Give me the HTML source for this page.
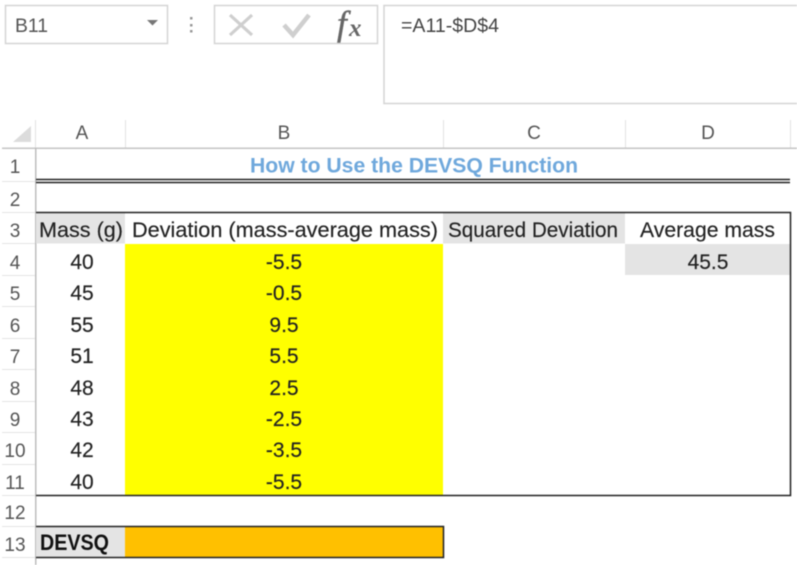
<!DOCTYPE html>
<html><head><meta charset="utf-8"><style>
html,body{margin:0;padding:0;background:#fff;width:797px;height:565px;overflow:hidden}
svg{display:block;filter:blur(.4px)}
text{font-family:"Liberation Sans",sans-serif}
.h{font-size:19px;fill:#555;text-anchor:middle}
.c{font-size:21px;fill:#222;text-anchor:middle;stroke:#222;stroke-width:.15px}
.t{font-size:21px;fill:#222;stroke:#222;stroke-width:.15px}
</style></head><body>
<svg width="797" height="565" viewBox="0 0 797 565" xmlns="http://www.w3.org/2000/svg">
<!-- top bar -->
<rect x="5.500" y="5.500" width="162" height="38" fill="#fff" stroke="#d4d4d4" stroke-width="1.500"/>
<text x="15" y="32" font-size="19" fill="#555" textLength="33" lengthAdjust="spacingAndGlyphs">B11</text>
<path d="M147 20h11l-5.500 5.500z" fill="#777"/>
<g fill="#999"><rect x="190" y="17" width="2.500" height="2.500"/><rect x="190" y="24" width="2.500" height="2.500"/><rect x="190" y="30" width="2.500" height="2.500"/></g>
<rect x="214.500" y="5.500" width="163" height="38" fill="#fff" stroke="#d4d4d4" stroke-width="1.500"/>
<path d="M230 15L252 35M252 15L230 35" stroke="#cfcfcf" stroke-width="3.200" fill="none"/>
<path d="M284 25L293 35L309 15" stroke="#cfcfcf" stroke-width="4.500" fill="none"/>
<text x="337" y="35" font-style="italic" font-size="35" fill="#666" stroke="#666" stroke-width=".5" style="font-family:'Liberation Serif',serif">f</text>
<text x="349" y="36" font-style="italic" font-weight="bold" font-size="25" fill="#666" style="font-family:'Liberation Serif',serif">x</text>
<rect x="384" y="5.500" width="420" height="98" fill="#fff" stroke="#d4d4d4" stroke-width="1.500"/>
<text x="401" y="32" font-size="19" fill="#444" textLength="98" lengthAdjust="spacingAndGlyphs">=A11-$D$4</text>

<!-- headers -->
<path d="M31 126V142H13z" fill="#dcdcdc"/>
<g stroke="#e2e2e2" stroke-width="1">
<path d="M35.500 120V148M125.500 120V148M443.500 120V148M625.500 120V148M790.500 120V148"/>
</g>
<rect x="2" y="147.500" width="795" height="1.500" fill="#c4c4c4"/>
<rect x="35" y="148" width="1.500" height="417" fill="#bdbdbd"/>
<g stroke="#e4e4e4" stroke-width="1">
<path d="M2 181.500H35M2 212.500H35M2 243.500H35M2 275.500H35M2 306.500H35M2 338.500H35M2 369.500H35M2 401.500H35M2 432.500H35M2 464.500H35M2 495.500H35M2 526.500H35M2 557.500H35"/>
</g>
<text class="h" x="82" y="139">A</text><text class="h" x="284" y="139">B</text><text class="h" x="534" y="139">C</text><text class="h" x="708" y="139">D</text>
<g class="rows">
<text class="h" x="15" y="173">1</text><text class="h" x="15" y="206">2</text><text class="h" x="15" y="237">3</text><text class="h" x="15" y="269">4</text><text class="h" x="15" y="300">5</text><text class="h" x="15" y="332">6</text><text class="h" x="15" y="363">7</text><text class="h" x="15" y="395">8</text><text class="h" x="15" y="426">9</text><text class="h" x="15" y="457">10</text><text class="h" x="15" y="489">11</text><text class="h" x="15" y="519">12</text><text class="h" x="15" y="551">13</text>
</g>

<!-- fills -->
<rect x="36" y="213" width="89" height="30.500" fill="#e4e4e4"/>
<rect x="443" y="213" width="182" height="30.500" fill="#e4e4e4"/>
<rect x="625" y="244" width="165" height="31" fill="#e4e4e4"/>
<rect x="125" y="244" width="318" height="251" fill="#ffff00"/>
<rect x="36" y="527" width="89" height="30" fill="#e4e4e4"/>
<rect x="125" y="527" width="318" height="30" fill="#ffc000"/>

<!-- borders -->
<path d="M36 179.500H790M36 182.500H790" stroke="#222" stroke-width="1.400" fill="none"/>
<path d="M36 212.500H790.500V495.500H36" stroke="#222" stroke-width="1.500" fill="none"/>
<path d="M36 526.500H443.500V557.500H36" stroke="#222" stroke-width="1.500" fill="none"/>

<!-- title -->
<text x="250" y="172.500" font-size="21" font-weight="bold" fill="#6fa8dc" textLength="328" lengthAdjust="spacingAndGlyphs">How to Use the DEVSQ Function</text>

<!-- row 3 -->
<text class="t" x="39" y="237" textLength="84" lengthAdjust="spacingAndGlyphs">Mass (g)</text>
<text class="t" x="132" y="237" textLength="306" lengthAdjust="spacingAndGlyphs">Deviation (mass-average mass)</text>
<text class="t" x="448" y="237" textLength="170" lengthAdjust="spacingAndGlyphs">Squared Deviation</text>
<text class="t" x="640" y="237" textLength="135" lengthAdjust="spacingAndGlyphs">Average mass</text>

<!-- data -->
<text class="c" x="82" y="269">40</text><text class="c" x="284" y="269">-5.5</text><text class="c" x="708" y="269">45.5</text>
<text class="c" x="82" y="300">45</text><text class="c" x="284" y="300">-0.5</text>
<text class="c" x="82" y="332">55</text><text class="c" x="284" y="332">9.5</text>
<text class="c" x="82" y="363">51</text><text class="c" x="284" y="363">5.5</text>
<text class="c" x="82" y="395">48</text><text class="c" x="284" y="395">2.5</text>
<text class="c" x="82" y="426">43</text><text class="c" x="284" y="426">-2.5</text>
<text class="c" x="82" y="457">42</text><text class="c" x="284" y="457">-3.5</text>
<text class="c" x="82" y="489">40</text><text class="c" x="284" y="489">-5.5</text>

<text x="40" y="550" font-size="22" font-weight="bold" fill="#111" textLength="69" lengthAdjust="spacingAndGlyphs">DEVSQ</text>
</svg>
</body></html>
